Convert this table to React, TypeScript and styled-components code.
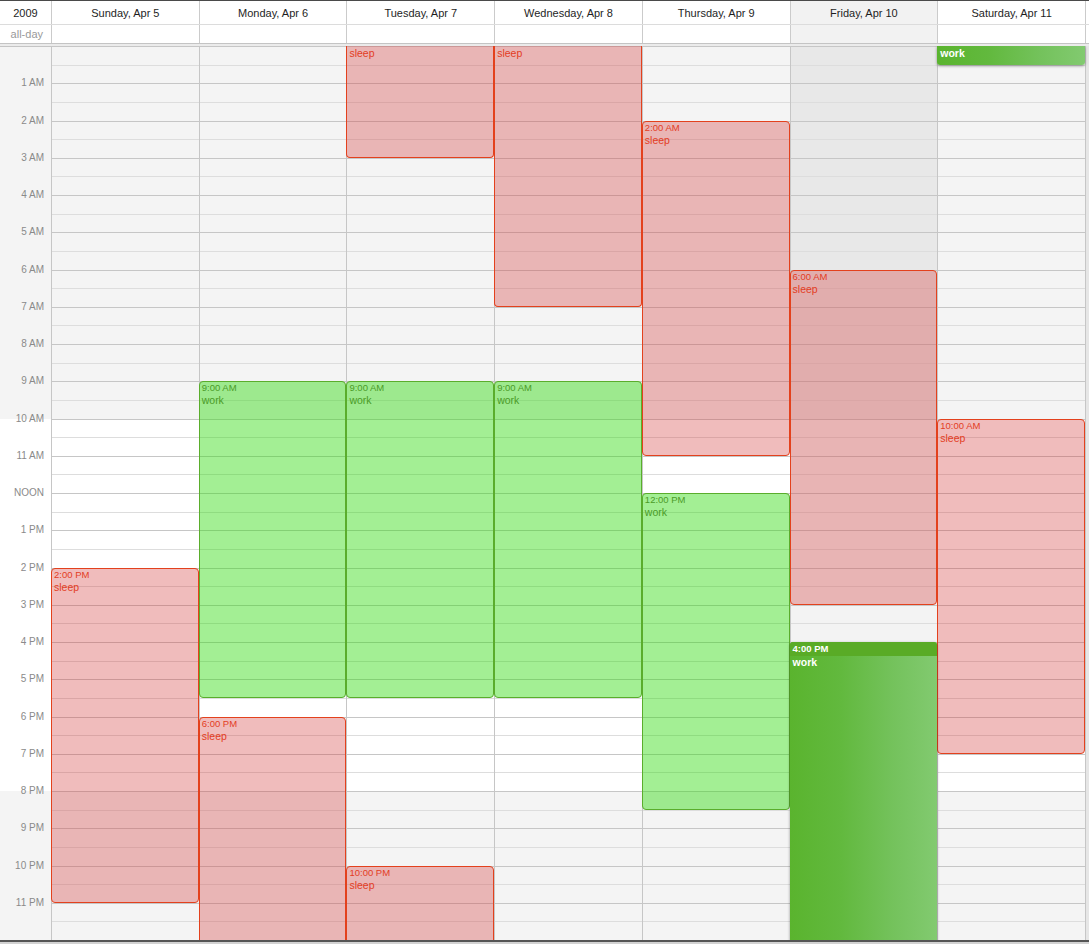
import React from 'react';
import styled, { createGlobalStyle, css } from 'styled-components';

const HOUR = 37.25;

type Kind = 'sleep' | 'work';
type CalEvent = {
  kind: Kind;
  start: number;
  end: number;
  time?: string;
  selected?: boolean;
  contTop?: boolean;
};
type Day = { label: string; today?: boolean; events: CalEvent[] };

const days: Day[] = [
  { label: 'Sunday, Apr 5', events: [{ kind: 'sleep', start: 14, end: 23, time: '2:00 PM' }] },
  {
    label: 'Monday, Apr 6',
    events: [
      { kind: 'work', start: 9, end: 17.5, time: '9:00 AM' },
      { kind: 'sleep', start: 18, end: 24.5, time: '6:00 PM' },
    ],
  },
  {
    label: 'Tuesday, Apr 7',
    events: [
      { kind: 'sleep', start: 0, end: 3, contTop: true },
      { kind: 'work', start: 9, end: 17.5, time: '9:00 AM' },
      { kind: 'sleep', start: 22, end: 24.5, time: '10:00 PM' },
    ],
  },
  {
    label: 'Wednesday, Apr 8',
    events: [
      { kind: 'sleep', start: 0, end: 7, contTop: true },
      { kind: 'work', start: 9, end: 17.5, time: '9:00 AM' },
    ],
  },
  {
    label: 'Thursday, Apr 9',
    events: [
      { kind: 'sleep', start: 2, end: 11, time: '2:00 AM' },
      { kind: 'work', start: 12, end: 20.5, time: '12:00 PM' },
    ],
  },
  {
    label: 'Friday, Apr 10',
    today: true,
    events: [
      { kind: 'sleep', start: 6, end: 15, time: '6:00 AM' },
      { kind: 'work', start: 16, end: 24.5, time: '4:00 PM', selected: true },
    ],
  },
  {
    label: 'Saturday, Apr 11',
    events: [
      { kind: 'work', start: 0, end: 0.5, selected: true, contTop: true },
      { kind: 'sleep', start: 10, end: 19, time: '10:00 AM' },
    ],
  },
];

const hours = Array.from({ length: 24 }, (_, i) => i);
const isOff = (h: number) => h < 10 || h >= 20;
const hourLabel = (h: number) => (h < 12 ? `${h} AM` : h === 12 ? 'NOON' : `${h - 12} PM`);

const GlobalStyle = createGlobalStyle`
  html, body { margin: 0; padding: 0; background: #fff; }
  body { font-family: "Liberation Sans", Arial, sans-serif; overflow: hidden; }
  * { box-sizing: border-box; }
`;

const Calendar = styled.div`
  width: 1089px;
  height: 944px;
  display: flex;
  flex-direction: column;
  overflow: hidden;
  border-top: 1px solid #4a4a4a;
  background: #fff;
`;

const columns = css`
  display: grid;
  grid-template-columns: 51px repeat(7, minmax(0, 1fr)) 4px;
`;

const HeaderRow = styled.div`
  ${columns};
  height: 24px;
  border-bottom: 1px solid #dcdcdc;
  flex: none;
`;

const YearCell = styled.div`
  display: flex;
  align-items: center;
  justify-content: center;
  font-size: 11px;
  color: #1e1e1e;
`;

const DayHeader = styled.div<{ $today?: boolean }>`
  display: flex;
  align-items: center;
  justify-content: center;
  border-left: 1px solid #cbcbcb;
  font-size: 11px;
  color: #1e1e1e;
  white-space: nowrap;
  background: ${(p) => (p.$today ? '#f2f2f2' : '#fff')};
`;

const GutterCell = styled.div`
  border-left: 1px solid #cbcbcb;
  background: #fff;
`;

const AllDayRow = styled.div`
  ${columns};
  height: 19px;
  border-bottom: 1px solid #c4c4c4;
  flex: none;
`;

const AllDayLabel = styled.div`
  display: flex;
  align-items: center;
  justify-content: flex-end;
  padding-right: 8px;
  font-size: 11px;
  color: #9a9a9a;
`;

const AllDayCell = styled.div<{ $today?: boolean }>`
  border-left: 1px solid #cbcbcb;
  background: ${(p) => (p.$today ? '#f2f2f2' : '#fff')};
`;

const Divider = styled.div`
  height: 2px;
  flex: none;
  background: #ebebeb;
`;

const Body = styled.div`
  ${columns};
  height: ${24 * HOUR}px;
  flex: none;
  overflow: hidden;
`;

const TimeColumn = styled.div`
  display: flex;
  flex-direction: column;
`;

const TimeSlot = styled.div<{ $off: boolean; $first: boolean }>`
  position: relative;
  height: ${HOUR}px;
  flex: none;
  background: ${(p) => (p.$off ? '#f4f4f4' : '#fff')};
  border-top: ${(p) => (p.$first ? '1px solid #c4c4c4' : 'none')};
`;

const TimeLabel = styled.span`
  position: absolute;
  right: 7px;
  top: -6px;
  font-size: 10px;
  line-height: 12px;
  color: #8a8a8a;
  white-space: nowrap;
`;

const DayColumn = styled.div`
  position: relative;
  display: flex;
  flex-direction: column;
  border-left: 1px solid #c6c6c6;
`;

const slotBg = (off: boolean, today?: boolean) =>
  today ? (off ? '#e8e8e8' : '#f3f3f3') : off ? '#f4f4f4' : '#ffffff';

const HourSlot = styled.div<{ $off: boolean; $today?: boolean }>`
  height: ${HOUR}px;
  flex: none;
  display: flex;
  flex-direction: column;
  background: ${(p) => slotBg(p.$off, p.$today)};
`;

const HalfSlot = styled.div<{ $major?: boolean }>`
  flex: 1;
  border-top: 1px solid ${(p) => (p.$major ? '#c6c6c6' : '#dddddd')};
`;

const BodyGutter = styled.div`
  border-left: 1px solid #c6c6c6;
  background: #e6e6e6;
`;

const EventBox = styled.div<{ $kind: Kind; $selected?: boolean; $contTop?: boolean }>`
  position: absolute;
  left: -1px;
  right: 0;
  overflow: hidden;
  border-radius: 4px;
  ${({ $kind, $selected }) =>
    $selected
      ? css`
          z-index: 2;
          border-radius: 3px;
          color: #fff;
          font-weight: bold;
          background: linear-gradient(to right, #5ab42e 0%, #62b93e 35%, #74c25c 70%, #82ca70 100%);
          box-shadow: 0 1px 3px rgba(0, 0, 0, 0.4);
        `
      : $kind === 'sleep'
      ? css`
          z-index: 1;
          background: rgba(213, 69, 69, 0.36);
          border: 1px solid #e3411d;
          color: #e33c1f;
        `
      : css`
          z-index: 1;
          background: rgba(50, 219, 17, 0.45);
          border: 1px solid #5aad2c;
          color: #4b9b27;
        `}
  ${({ $contTop }) =>
    $contTop &&
    css`
      border-top-width: 0;
      border-top-left-radius: 0;
      border-top-right-radius: 0;
      padding-top: 1px;
    `}
`;

const EventTime = styled.div`
  font-size: 9.5px;
  line-height: 12px;
  padding-left: 2px;
  white-space: nowrap;
`;

const EventTitle = styled.div<{ $selected?: boolean }>`
  font-size: 10.5px;
  line-height: 13px;
  padding-left: ${(p) => (p.$selected ? 3 : 2)}px;
  white-space: nowrap;
`;

const SelectedHeader = styled.div`
  height: 14px;
  line-height: 14px;
  padding-left: 3px;
  font-size: 9.5px;
  font-weight: bold;
  color: #fff;
  background: #59ab26;
  white-space: nowrap;
`;

const Footer = styled.div`
  flex: 1;
  border-top: 2px solid #555;
  background: #d2d2d2;
`;

function EventView({ ev }: { ev: CalEvent }) {
  const style = { top: ev.start * HOUR, height: (ev.end - ev.start) * HOUR };
  return (
    <EventBox $kind={ev.kind} $selected={ev.selected} $contTop={ev.contTop} style={style}>
      {ev.selected && ev.time ? (
        <SelectedHeader>{ev.time}</SelectedHeader>
      ) : (
        ev.time && <EventTime>{ev.time}</EventTime>
      )}
      <EventTitle $selected={ev.selected}>{ev.kind}</EventTitle>
    </EventBox>
  );
}

export default function App() {
  return (
    <>
      <GlobalStyle />
      <Calendar>
        <HeaderRow>
          <YearCell>2009</YearCell>
          {days.map((d) => (
            <DayHeader key={d.label} $today={d.today}>
              {d.label}
            </DayHeader>
          ))}
          <GutterCell />
        </HeaderRow>
        <AllDayRow>
          <AllDayLabel>all-day</AllDayLabel>
          {days.map((d) => (
            <AllDayCell key={d.label} $today={d.today} />
          ))}
          <GutterCell />
        </AllDayRow>
        <Divider />
        <Body>
          <TimeColumn>
            {hours.map((h) => (
              <TimeSlot key={h} $off={isOff(h)} $first={h === 0}>
                {h > 0 && <TimeLabel>{hourLabel(h)}</TimeLabel>}
              </TimeSlot>
            ))}
          </TimeColumn>
          {days.map((d) => (
            <DayColumn key={d.label}>
              {hours.map((h) => (
                <HourSlot key={h} $off={isOff(h)} $today={d.today}>
                  <HalfSlot $major />
                  <HalfSlot />
                </HourSlot>
              ))}
              {d.events.map((ev, i) => (
                <EventView key={i} ev={ev} />
              ))}
            </DayColumn>
          ))}
          <BodyGutter />
        </Body>
        <Footer />
      </Calendar>
    </>
  );
}
